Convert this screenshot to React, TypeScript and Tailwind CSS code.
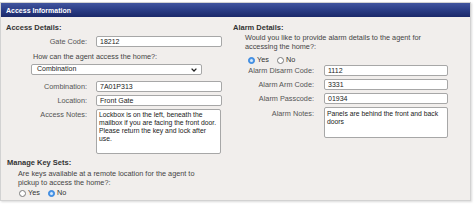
import React from "react";

const font = { fontFamily: '"Liberation Sans", Arial, sans-serif' };

function Input({ value, w }: { value: string; w: string }) {
  return (
    <div
      className={`${w} h-[11px] bg-white border border-[#a7a7a7] rounded-[2px] flex items-center pl-[3px] text-[7px] leading-[9px] text-[#222]`}
    >
      {value}
    </div>
  );
}

function Radio({ checked }: { checked: boolean }) {
  return checked ? (
    <span className="w-[7px] h-[7px] rounded-full bg-[#4a97ea] border border-[#3a86dc] flex items-center justify-center shrink-0">
      <span className="w-[3px] h-[3px] rounded-full bg-[#d6e8fc]" />
    </span>
  ) : (
    <span className="w-[7px] h-[7px] rounded-full bg-white border border-[#7b7b7b] shrink-0" />
  );
}

function RadioPair({ yes }: { yes: boolean }) {
  return (
    <div className="flex items-center h-[8px] text-[7.3px] leading-[8px] text-[#333]">
      <Radio checked={yes} />
      <span className="ml-[2px]">Yes</span>
      <span className="ml-[8px] flex items-center">
        <Radio checked={!yes} />
        <span className="ml-[2px]">No</span>
      </span>
    </div>
  );
}

function Row({
  label,
  labelW,
  gap,
  children,
  mt,
}: {
  label: string;
  labelW: string;
  gap: string;
  children: React.ReactNode;
  mt: string;
}) {
  return (
    <div className={`flex items-center ${mt}`}>
      <div className={`${labelW} text-right text-[7.3px] leading-[9px] text-[#555] whitespace-nowrap`}>{label}</div>
      <div className={gap}>{children}</div>
    </div>
  );
}

export default function App() {
  return (
    <div className="w-[474px] h-[204px] bg-white pt-[2px]" style={font}>
      <div className="w-[471px] h-[199px] bg-[#f1eeec] border border-[#d2d2d2] shadow-[1px_1px_2px_rgba(0,0,0,0.15)] flex flex-col">
        <div className="h-[14px] bg-gradient-to-b from-[#41559f] via-[#2b3d86] to-[#1b296a] flex items-center pl-[5px]">
          <span className="text-white font-bold text-[7px] leading-[9px]">Access Information</span>
        </div>
        <div className="flex pt-[6px]">
          {/* Left column */}
          <div className="w-[232px] pl-[5px]">
            <div className="h-[10px] text-[7.5px] leading-[10px] font-bold text-[#333]">Access Details:</div>
            <Row label="Gate Code:" labelW="w-[81px]" gap="ml-[9px]" mt="mt-[3px]">
              <Input value="18212" w="w-[126px]" />
            </Row>
            <div className="mt-[5px] ml-[27px] h-[9px] text-[7.3px] leading-[9px] text-[#444]">
              How can the agent access the home?:
            </div>
            <div className="mt-[3px] ml-[25px] w-[171px] h-[11px] bg-white border border-[#a7a7a7] rounded-[2px] flex items-center justify-between pl-[5px] pr-[4px] text-[7px] text-[#222]">
              <span>Combination</span>
              <svg width="6" height="4" viewBox="0 0 6 4">
                <polyline points="0.6,0.6 3,3 5.4,0.6" fill="none" stroke="#222" strokeWidth="1.3" />
              </svg>
            </div>
            <Row label="Combination:" labelW="w-[81px]" gap="ml-[9px]" mt="mt-[6px]">
              <Input value="7A01P313" w="w-[126px]" />
            </Row>
            <Row label="Location:" labelW="w-[81px]" gap="ml-[9px]" mt="mt-[3px]">
              <Input value="Front Gate" w="w-[126px]" />
            </Row>
            <div className="flex items-start mt-[3px]">
              <div className="w-[81px] text-right text-[7.3px] leading-[9px] text-[#555] pt-[1px]">Access Notes:</div>
              <div className="ml-[9px] w-[125px] h-[45px] bg-white border border-[#a7a7a7] rounded-[2px] pl-[2px] pt-[1px] text-[6.8px] leading-[8px] text-[#222] whitespace-nowrap">
                Lockbox is on the left, beneath the
                <br />
                mailbox if you are facing the front door.
                <br />
                Please return the key and lock after
                <br />
                use.
              </div>
            </div>
            <div className="mt-[4px] ml-[1px] h-[10px] text-[7.5px] leading-[10px] font-bold text-[#333]">Manage Key Sets:</div>
            <div className="mt-[2px] ml-[12px] text-[7.3px] leading-[8.5px] text-[#444] whitespace-nowrap">
              Are keys available at a remote location for the agent to
              <br />
              pickup to access the home?:
            </div>
            <div className="mt-[2px] ml-[13px]">
              <RadioPair yes={false} />
            </div>
          </div>
          {/* Right column */}
          <div className="w-[237px]">
            <div className="h-[10px] text-[7.5px] leading-[10px] font-bold text-[#333]">Alarm Details:</div>
            <div className="mt-[1px] ml-[12px] text-[7.3px] leading-[8.5px] text-[#444] whitespace-nowrap">
              Would you like to provide alarm details to the agent for
              <br />
              accessing the home?:
            </div>
            <div className="mt-[5px] ml-[15px]">
              <RadioPair yes={true} />
            </div>
            <Row label="Alarm Disarm Code:" labelW="w-[81px]" gap="ml-[10px]" mt="mt-[1px]">
              <Input value="1112" w="w-[124px]" />
            </Row>
            <Row label="Alarm Arm Code:" labelW="w-[81px]" gap="ml-[10px]" mt="mt-[3px]">
              <Input value="3331" w="w-[124px]" />
            </Row>
            <Row label="Alarm Passcode:" labelW="w-[81px]" gap="ml-[10px]" mt="mt-[3px]">
              <Input value="01934" w="w-[124px]" />
            </Row>
            <div className="flex items-start mt-[3px]">
              <div className="w-[81px] text-right text-[7.3px] leading-[9px] text-[#555] pt-[2px]">Alarm Notes:</div>
              <div className="ml-[10px] w-[124px] h-[31px] bg-white border border-[#a7a7a7] rounded-[2px] pl-[2px] pt-[2px] text-[6.8px] leading-[8px] text-[#222] whitespace-nowrap">
                Panels are behind the front and back
                <br />
                doors
              </div>
            </div>
          </div>
        </div>
      </div>
    </div>
  );
}
